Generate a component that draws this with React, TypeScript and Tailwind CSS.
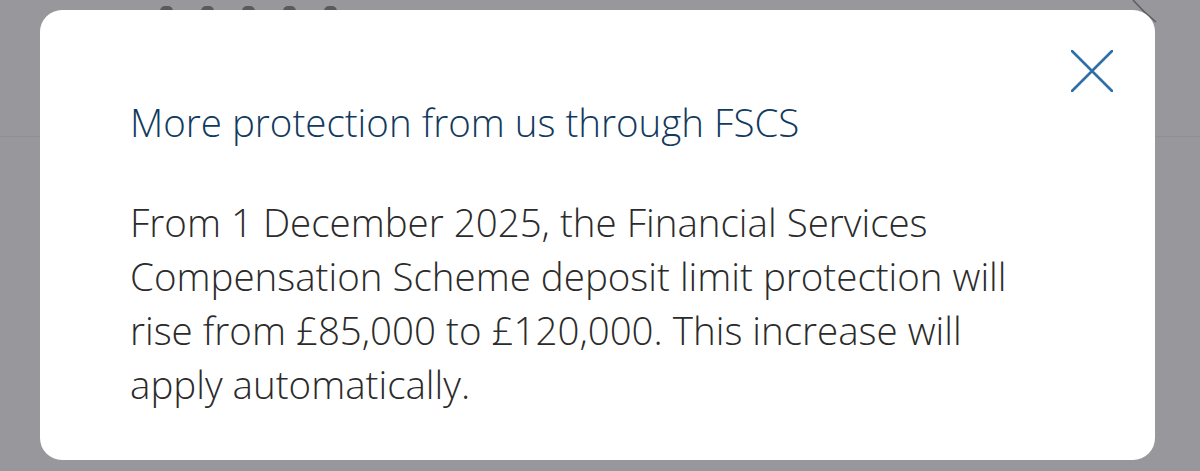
import React from 'react';

const CloseIcon = () => (
  <svg width="42" height="42" viewBox="0 0 42 42" fill="none">
    <path d="M1 1L41 41M41 1L1 41" stroke="#2f6fa8" strokeWidth="2.6" strokeLinecap="round" />
  </svg>
);

const dots = [13, 13, 13, 12, 12];

export default function App() {
  return (
    <div className="relative h-[471px] w-[1200px] overflow-hidden bg-[#98989c] pt-[10px] pl-[40px] pr-[45px]">
      {/* faint content behind the sheet */}
      <div className="absolute inset-x-0 top-[136px] h-px bg-[#8f8f94]" />
      <div className="absolute left-[160px] top-[6px] flex gap-[28px]">
        {dots.map((w, i) => (
          <span key={i} className="h-[5px] w-[13px] rounded-t-full bg-[#5a5a5e]" />
        ))}
      </div>
      <svg className="absolute right-[30px] top-0" width="40" height="30" viewBox="0 0 40 30">
        <path d="M3 0C10 8 16 14 26 22" stroke="#5b5b60" strokeWidth="1.5" fill="none" />
      </svg>

      <div className="relative flex h-[450px] flex-col rounded-[22px] bg-white pt-[40px] pl-[90px] pr-[42px] font-['Open_Sans',sans-serif]">
        <div className="flex justify-end">
          <button aria-label="Close">
            <CloseIcon />
          </button>
        </div>
        <h2 className="mt-[6px] text-[38.5px] leading-[48px] font-light text-[#123a5e]">
          More protection from us through FSCS
        </h2>
        <p className="mt-[49px] w-[900px] text-[38.5px] leading-[54px] font-light text-[#2b2b2b]">
          From 1 December 2025, the Financial Services Compensation Scheme deposit limit protection will rise from £85,000 to £120,000. This increase will apply automatically.
        </p>
      </div>
    </div>
  );
}
